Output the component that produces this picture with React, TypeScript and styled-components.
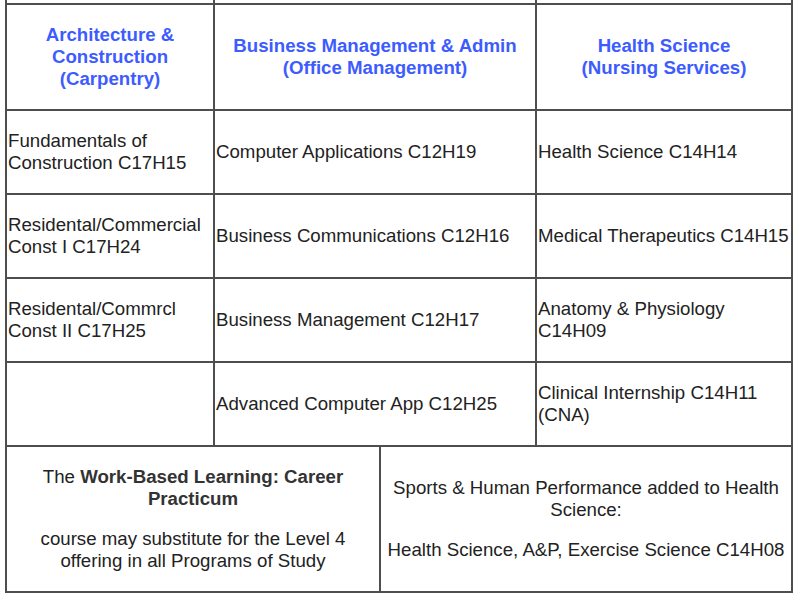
import styled, { createGlobalStyle } from "styled-components";

const GlobalStyle = createGlobalStyle`
  *, *::before, *::after {
    box-sizing: border-box;
  }
  body {
    margin: 0;
    background: #ffffff;
    font-family: "Liberation Sans", Arial, sans-serif;
    color: #222222;
  }
`;

const pathways = [
  {
    title: ["Architecture &", "Construction", "(Carpentry)"],
    courses: [
      "Fundamentals of Construction C17H15",
      "Residental/Commercial Const I C17H24",
      "Residental/Commrcl Const II C17H25",
      "",
    ],
  },
  {
    title: ["Business Management & Admin", "(Office Management)"],
    courses: [
      "Computer Applications C12H19",
      "Business Communications C12H16",
      "Business Management C12H17",
      "Advanced Computer App C12H25",
    ],
  },
  {
    title: ["Health Science", "(Nursing Services)"],
    courses: [
      "Health Science C14H14",
      "Medical Therapeutics C14H15",
      "Anatomy & Physiology C14H09",
      "Clinical Internship C14H11 (CNA)",
    ],
  },
];

const widths = [208, 322, 256];

export default function App() {
  return (
    <>
      <GlobalStyle />
      <Page>
        <Sheet>
          <colgroup>
            {widths.map((w) => (
              <Col key={w} $w={w} />
            ))}
          </colgroup>
          <tbody>
            <tr>
              {pathways.map((p) => (
                <Cell key={p.title[0]} $h={5} />
              ))}
            </tr>
            <tr>
              {pathways.map((p) => (
                <HeadCell key={p.title[0]} $h={106}>
                  {p.title.map((line) => (
                    <div key={line}>{line}</div>
                  ))}
                </HeadCell>
              ))}
            </tr>
            {[0, 1, 2, 3].map((row) => (
              <tr key={row}>
                {pathways.map((p) => (
                  <Cell key={p.title[0]} $h={84}>
                    {p.courses[row]}
                  </Cell>
                ))}
              </tr>
            ))}
          </tbody>
        </Sheet>
        <Sheet>
          <colgroup>
            <Col $w={374} />
            <Col $w={412} />
          </colgroup>
          <tbody>
            <tr>
              <NoteCell $h={146}>
                <Para>
                  The <strong>Work-Based Learning: Career Practicum</strong>
                </Para>
                <Para>course may substitute for the Level 4 offering in all Programs of Study</Para>
              </NoteCell>
              <NoteCell $h={146}>
                <Para>Sports &amp; Human Performance added to Health Science:</Para>
                <Para>Health Science, A&amp;P, Exercise Science C14H08</Para>
              </NoteCell>
            </tr>
          </tbody>
        </Sheet>
      </Page>
    </>
  );
}

const Page = styled.div`
  padding-left: 5px;
`;

const Sheet = styled.table`
  border-collapse: separate;
  border-spacing: 0;
  table-layout: fixed;
  width: 788px;
  border-left: 2px solid #4e4e4e;
  font-size: 18.67px;
  line-height: 22px;
`;

const Col = styled.col<{ $w: number }>`
  width: ${(p) => p.$w}px;
`;

const Cell = styled.td<{ $h: number }>`
  height: ${(p) => p.$h}px;
  padding: 0 1px;
  border-right: 2px solid #4e4e4e;
  border-bottom: 2px solid #4e4e4e;
  vertical-align: middle;
  text-align: left;
  color: #222222;
`;

const HeadCell = styled(Cell)`
  text-align: center;
  font-weight: bold;
  color: #3d5cff;
`;

const NoteCell = styled(Cell)`
  text-align: center;
  padding: 0 4px;

  strong {
    color: #333333;
  }
`;

const Para = styled.p`
  margin: 0;

  & + & {
    margin-top: 18px;
  }
`;
